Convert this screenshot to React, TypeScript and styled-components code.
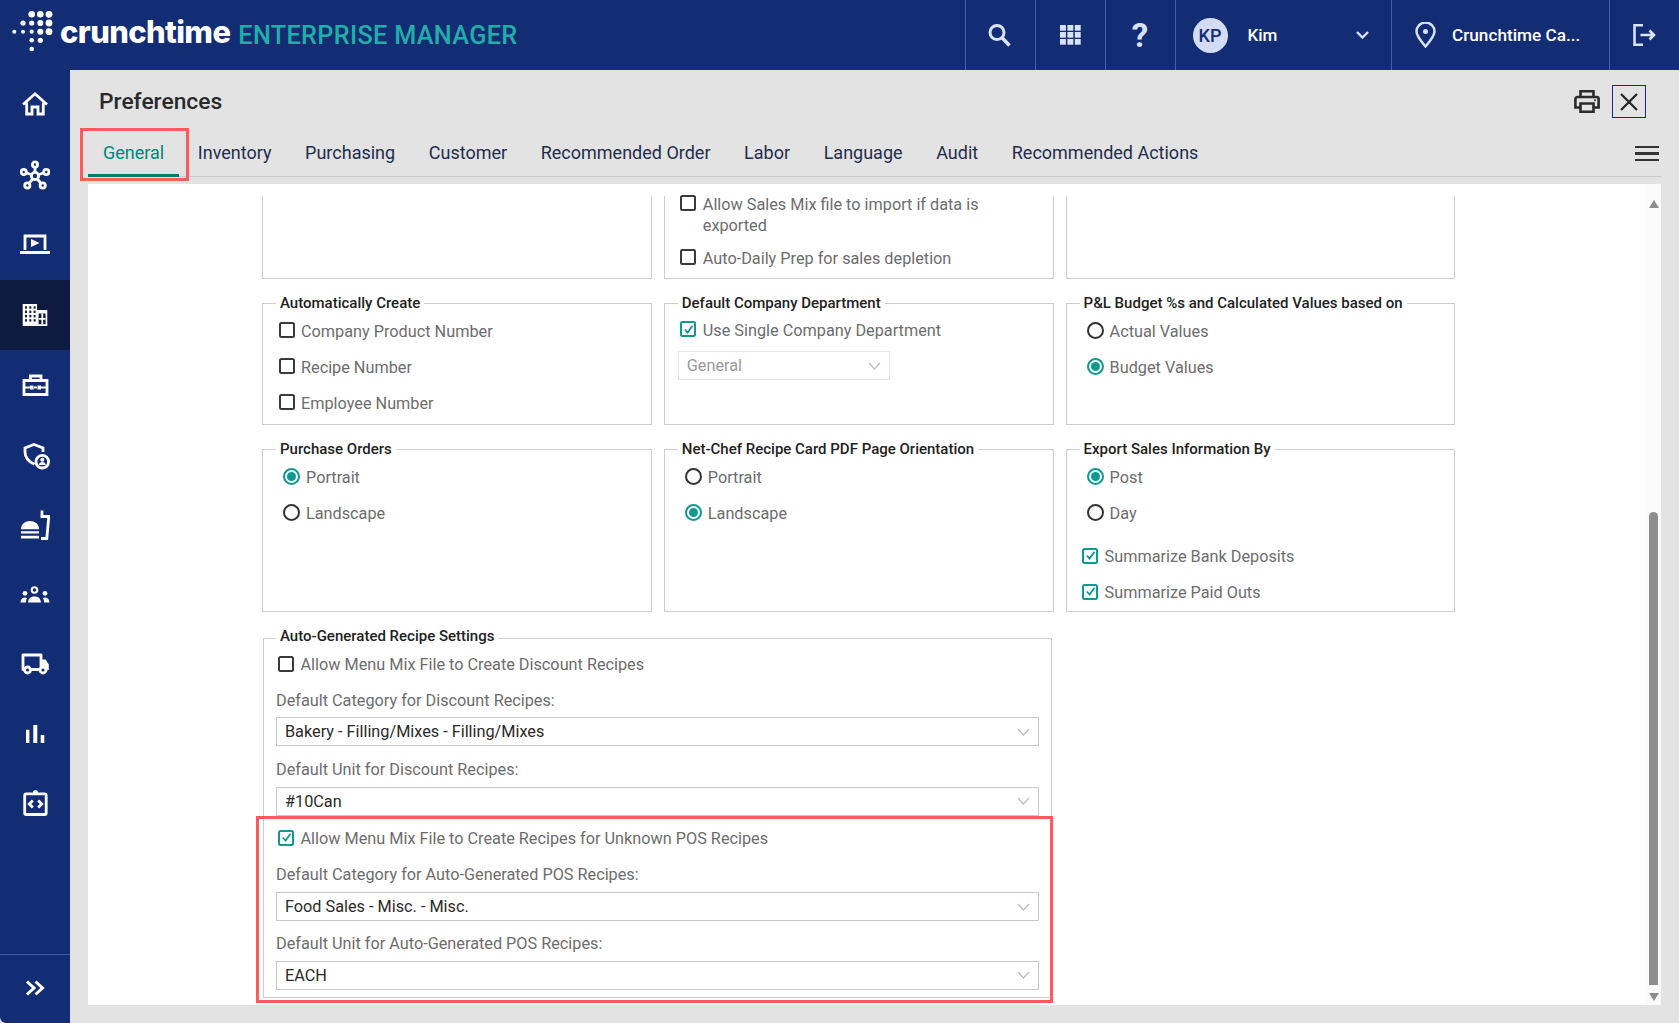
import React from 'react';
import styled, { createGlobalStyle } from 'styled-components';

const GlobalStyle = createGlobalStyle`
  html, body {
    margin: 0;
    padding: 0;
    height: 100%;
    background: #e3e3e3;
  }
  * {
    box-sizing: border-box;
  }
`;

const Page = styled.div`
  height: 100vh;
  display: flex;
  flex-direction: column;
  overflow: hidden;
  font-family: Roboto, 'Liberation Sans', sans-serif;
`;

/* ---------- top bar ---------- */

const TopBar = styled.header`
  height: 70px;
  flex: none;
  display: flex;
  align-items: stretch;
  background: #132d75;
`;

const Brand = styled.div`
  display: flex;
  align-items: center;
  flex: 1;
`;

const BrandDots = styled.svg`
  width: 60px;
  height: 70px;
  flex: none;
`;

const Wordmark = styled.span`
  font-family: Inter, sans-serif;
  font-weight: 800;
  font-size: 30.9px;
  letter-spacing: -0.6px;
  color: #fff;
  margin-top: -7px;
`;

const ProductName = styled.span`
  font-weight: 500;
  font-size: 25.2px;
  letter-spacing: 0.35px;
  color: #22aea8;
  margin-left: 8px;
`;

const BarCell = styled.div<{ $width: number }>`
  width: ${(p) => p.$width}px;
  flex: none;
  display: flex;
  align-items: center;
  justify-content: center;
  border-left: 1px solid #4460ad;
  color: #d8e2fb;
`;

const UserCell = styled(BarCell)`
  justify-content: flex-start;
  padding: 0 22px 0 17px;
`;

const LocationCell = styled(BarCell)`
  justify-content: flex-start;
  padding-left: 23px;
`;

const Avatar = styled.div`
  width: 35px;
  height: 35px;
  border-radius: 50%;
  background: #d2dcf7;
  color: #132d75;
  font-weight: 500;
  font-size: 18px;
  display: flex;
  align-items: center;
  justify-content: center;
`;

const UserName = styled.span`
  color: #fff;
  font-size: 17px;
  font-weight: 500;
  margin-left: 20px;
  flex: 1;
`;

const SiteName = styled.span`
  color: #fff;
  font-size: 17.2px;
  font-weight: 500;
  margin-left: 16px;
  white-space: nowrap;
`;

const HelpMark = styled.span`
  font-weight: 700;
  font-size: 33px;
  line-height: 1;
  color: #d8e2fb;
`;

/* ---------- side rail ---------- */

const Body = styled.div`
  flex: 1;
  display: flex;
  min-height: 0;
`;

const Rail = styled.nav`
  width: 70px;
  flex: none;
  display: flex;
  flex-direction: column;
  background: #132d75;
  border-bottom-left-radius: 6px;
`;

const RailItem = styled.div<{ $active?: boolean }>`
  height: 70px;
  display: flex;
  align-items: center;
  justify-content: center;
  color: #fff;
  background: ${(p) => (p.$active ? '#0f1a40' : 'transparent')};
`;

const RailFooter = styled.div`
  margin-top: auto;
  height: 69px;
  padding-bottom: 3px;
  border-top: 1px solid #3c57a3;
  display: flex;
  align-items: center;
  justify-content: center;
  color: #fff;
`;

/* ---------- main area ---------- */

const Main = styled.main`
  flex: 1;
  display: flex;
  flex-direction: column;
  min-width: 0;
  background: #e3e3e3;
  padding: 0 18px;
`;

const TitleRow = styled.div`
  height: 58px;
  flex: none;
  display: flex;
  align-items: center;
  padding: 5px 15px 0 11px;
`;

const Title = styled.h1`
  flex: 1;
  margin: 0;
  font-weight: 500;
  font-size: 22.8px;
  color: #2a2a2a;
`;

const CloseButton = styled.button`
  width: 34px;
  height: 33px;
  margin-left: 12px;
  padding: 0;
  background: none;
  border: 1px solid #132d75;
  display: flex;
  align-items: center;
  justify-content: center;
  color: #222;
`;

const TabBar = styled.div`
  height: 49px;
  flex: none;
  display: flex;
  align-items: stretch;
  border-bottom: 1.5px solid #c9c9c9;
`;

const Tab = styled.div<{ $active?: boolean }>`
  position: relative;
  padding: 3px 15px 0;
  margin-right: 3.6px;
  margin-bottom: -1px;
  display: flex;
  align-items: center;
  font-size: 18px;
  color: ${(p) => (p.$active ? '#00857c' : '#1f2d4d')};
  border-bottom: 3px solid ${(p) => (p.$active ? '#00796f' : 'transparent')};
`;

const TabCallout = styled.span`
  position: absolute;
  left: -8px;
  right: -10px;
  top: 0;
  bottom: -7px;
  border: 3px solid #f85c5c;
`;

const MenuButton = styled.div`
  margin-left: auto;
  margin-right: 2px;
  align-self: center;
  width: 24px;
  height: 15px;
  margin-top: 3px;
  border-top: 2.5px solid #333;
  border-bottom: 2.5px solid #333;
  display: flex;
  align-items: center;

  &::before {
    content: '';
    display: block;
    width: 100%;
    height: 2.5px;
    background: #333;
  }
`;

const Panel = styled.div`
  margin-top: 7px;
  height: 821px;
  flex: none;
  display: flex;
  background: #fff;
`;

const PanelContent = styled.div`
  flex: 1;
  padding: 12px 0 0 174px;
`;

const Columns = styled.div`
  width: 1194px;
  display: grid;
  grid-template-columns: repeat(3, 389.8px);
  grid-template-rows: 82.5px 121.5px 163px 360px;
  column-gap: 12px;
  row-gap: 24.6px;
`;

const Group = styled.section<{ $clipped?: boolean; $pad?: number }>`
  position: relative;
  border: 1.5px solid #cdcdcd;
  border-top-style: ${(p) => (p.$clipped ? 'none' : 'solid')};
  padding: ${(p) => p.$pad ?? 9}px 0 0 16px;
`;

const Legend = styled.h3`
  position: absolute;
  left: 13px;
  top: -11px;
  margin: 0;
  padding: 0 4px;
  line-height: 20px;
  font-weight: 500;
  font-size: 15px;
  color: #222;
  background: #fff;
  white-space: nowrap;
`;

const RecipeGroup = styled(Group)`
  grid-column: 1 / span 2;
  margin: 1px 2px -1px 1px;
  padding: 8px 12px 0;

  ${Legend} {
    left: 12px;
    top: -13px;
  }
`;

const OptionRow = styled.div<{ $wrap?: boolean; $height?: number }>`
  height: ${(p) => p.$height ?? 36}px;
  display: flex;
  align-items: ${(p) => (p.$wrap ? 'flex-start' : 'center')};
  font-size: 16.25px;
  line-height: 21px;
  color: #6d6d6d;
`;

const OptionText = styled.span`
  width: 290px;
  margin-top: -2px;
`;

const ExtraOptions = styled.div`
  margin-top: 7.5px;
`;

const CheckBox = styled.span<{ $checked?: boolean; $nudge?: number }>`
  width: 16px;
  height: 16px;
  flex: none;
  margin: -2px 6.5px 0 ${(p) => p.$nudge ?? -0.5}px;
  border: 2px solid ${(p) => (p.$checked ? '#0d9a92' : '#3a3a3a')};
  border-radius: 2.5px;
  background: #fff;
  display: flex;
  align-items: center;
  justify-content: center;
`;

const WrappedCheckBox = styled(CheckBox)`
  margin-top: -1px;
`;

const Radio = styled.span<{ $checked?: boolean }>`
  width: 17px;
  height: 17px;
  flex: none;
  margin: -2px 6px 0 4px;
  border: 2px solid ${(p) => (p.$checked ? '#0d9a92' : '#333')};
  border-radius: 50%;
  background: #fff;
  display: flex;
  align-items: center;
  justify-content: center;

  &::after {
    content: '';
    display: ${(p) => (p.$checked ? 'block' : 'none')};
    width: 9px;
    height: 9px;
    border-radius: 50%;
    background: #0d9a92;
  }
`;

const FieldLabel = styled.div<{ $top: number; $gap?: number }>`
  height: 22px;
  line-height: 22px;
  margin: ${(p) => p.$top}px 0 ${(p) => p.$gap ?? 6}px;
  font-size: 16.25px;
  color: #6d6d6d;
`;

const SelectBox = styled.div<{ $disabled?: boolean; $width?: number }>`
  height: 29px;
  width: ${(p) => (p.$width ? `${p.$width}px` : '100%')};
  display: flex;
  align-items: center;
  justify-content: space-between;
  padding: 0 8px;
  font-size: 16.25px;
  color: ${(p) => (p.$disabled ? '#9a9a9a' : '#2a2a2a')};
  border: 1.5px solid ${(p) => (p.$disabled ? '#e6e6e6' : '#c9c9c9')};
  background: #fff;
`;

const GeneralSelect = styled(SelectBox)`
  margin: 3px 0 0 -3px;
`;

const Callout = styled.div`
  position: relative;
  padding-top: 5px;

  &::after {
    content: '';
    position: absolute;
    left: -20px;
    right: -14px;
    top: 0;
    bottom: -13px;
    border: 3px solid #f85c5c;
    pointer-events: none;
  }
`;

const ScrollTrack = styled.div`
  width: 16px;
  flex: none;
  margin-left: -21px;
  position: relative;
  display: flex;
  flex-direction: column;
  align-items: center;
  background: #fafafa;
  padding: 16px 3px 4px 4px;
`;

const ScrollArrow = styled.span<{ $down?: boolean }>`
  width: 0;
  height: 0;
  flex: none;
  border-left: 5px solid transparent;
  border-right: 5px solid transparent;
  border-bottom: ${(p) => (p.$down ? '0' : '8px solid #8e8e8e')};
  border-top: ${(p) => (p.$down ? '8px solid #8e8e8e' : '0')};
`;

const ScrollThumb = styled.span`
  width: 9px;
  height: 473px;
  flex: none;
  margin-top: auto;
  margin-bottom: 8px;
  border-radius: 5px 5px 0 0;
  background: #8e8e8e;
`;

/* ---------- drawings ---------- */

const dots: [number, number, number][] = [
  [31.7, 14.3, 3.3], [40.3, 14.3, 3.3], [49, 14.3, 3.4],
  [23, 23, 2.6], [31.7, 23, 2.6], [40.3, 23, 3], [49, 23, 3.4],
  [14.3, 31.7, 2], [23, 31.7, 2], [31.7, 31.7, 2.1], [40.3, 31.7, 3], [49, 31.7, 3.4],
  [31.7, 40.3, 2.3], [40.3, 40.3, 2.6],
  [31.7, 49, 2.3],
];

const LogoDots = () => (
  <BrandDots viewBox="0 0 60 70">
    {dots.map(([cx, cy, r]) => (
      <circle key={`${cx}-${cy}`} cx={cx} cy={cy} r={r} fill="#fff" />
    ))}
  </BrandDots>
);

const line = { fill: 'none', stroke: 'currentColor', strokeWidth: 2.8 } as const;

const Icon30 = ({ children }: { children: React.ReactNode }) => (
  <svg width="30" height="30" viewBox="0 0 30 30">
    {children}
  </svg>
);

const HomeIcon = () => (
  <Icon30>
    <path {...line} d="M3 14.5 15 3.800l12 10.700M6.700 12.500V24H12v-7h6v7h5.300V12.500" />
  </Icon30>
);

const NetworkIcon = () => (
  <Icon30>
    <g {...line}>
      <circle cx="15" cy="16" r="3.600" />
      <circle cx="15" cy="4.500" r="2.600" />
      <circle cx="3.700" cy="12" r="2.600" />
      <circle cx="26.300" cy="12" r="2.600" />
      <circle cx="7.300" cy="25.500" r="2.600" />
      <circle cx="22.700" cy="25.500" r="2.600" />
      <path d="M15 7v5.500M6.200 12.800l5.400 1.900M23.800 12.800l-5.400 1.900M8.900 23.500l3.800-4.500M21.100 23.500l-3.800-4.500" />
    </g>
  </Icon30>
);

const LessonIcon = () => (
  <Icon30>
    <path {...line} d="M5 20V6h20v14" />
    <path d="M0 21h30v3H0z" fill="currentColor" />
    <path d="M11 9l8.500 4-8.500 4z" fill="currentColor" />
  </Icon30>
);

const BuildingIcon = () => (
  <Icon30>
    <path d="M2.700 4H17v22H2.700zM17 10h10.300v16H17z" fill="currentColor" />
    {[5, 9.300, 13.600].map((x) =>
      [6.300, 10.600, 14.900, 19.200].map((y) => (
        <rect key={`${x}-${y}`} x={x} y={y} width="2" height="2.400" fill="#0f1a40" />
      )),
    )}
    <path d="M18.600 13.500h7v10.700h-7z" fill="#0f1a40" />
    <path d="M21.400 13.500h1.800v10.700h-1.800zM18.600 18h7v1.800h-7z" fill="currentColor" />
  </Icon30>
);

const CaseIcon = () => (
  <Icon30>
    <path {...line} d="M4 10.500h23v14H4zM10.500 10.500V6h10.500v4.500" />
    <path {...line} d="M4 17.500h6M14 17.500h3M21 17.500h6" strokeWidth={2.200} />
    <path d="M10 15.500h3.500v4H10zM17.500 15.500H21v4h-3.500z" fill="currentColor" />
  </Icon30>
);

const ShieldIcon = () => (
  <Icon30>
    <path {...line} d="M14.500 24.300C8 21.500 5 17.500 5 12V8l9-3.500L23 8v4" />
    <circle cx="22.300" cy="21.700" r="6.300" {...line} />
    <circle cx="22.300" cy="19.800" r="2" fill="currentColor" />
    <path d="M18.800 25c.5-2.200 1.800-3 3.500-3s3 .8 3.500 3z" fill="currentColor" />
  </Icon30>
);

const FoodIcon = () => (
  <Icon30>
    <path d="M1 19.200c0-5.200 4-8.200 9-8.200s9 3 9 8.200z" fill="currentColor" />
    <path d="M1 21.300h18v2.300H1zM1 25.800h18v2.800H1z" fill="currentColor" />
    <path {...line} d="M20.500 6.500h8.300L26.800 28.500H21M22 .5v6" />
  </Icon30>
);

const TeamIcon = () => (
  <Icon30>
    <circle cx="14.500" cy="10" r="2.800" {...line} strokeWidth={2} />
    <circle cx="5" cy="13.300" r="2.400" fill="currentColor" />
    <circle cx="25" cy="13.300" r="2.400" fill="currentColor" />
    <path d="M8 22.500c.5-4.500 3-6 6.500-6s6 1.500 6.500 6zM.5 22.500c.2-3.500 2-5 4.500-5 1 0 1.600.2 2.200.6C6.200 19.300 6 20.700 6 22.500zM29.500 22.500c-.2-3.500-2-5-4.500-5-1 0-1.600.2-2.200.6 1 1.200 1.200 2.600 1.200 4.400z" fill="currentColor" />
  </Icon30>
);

const TruckIcon = () => (
  <Icon30>
    <path {...line} d="M4.300 19.500H3V5h18v14.500H11M17 19.500h2" strokeLinejoin="round" />
    <path d="M21 9.500h4.500l3.300 5v5.500H21z" fill="currentColor" />
    <circle cx="7.600" cy="20" r="3" {...line} fill="#132d75" />
    <circle cx="23" cy="20" r="3" {...line} fill="#132d75" />
  </Icon30>
);

const BarsIcon = () => (
  <Icon30>
    <path d="M6 9.700h3.400V23H6zM13.300 5h4v18h-4zM20.700 15h3.600v8h-3.600z" fill="currentColor" />
  </Icon30>
);

const ClipCodeIcon = () => (
  <Icon30>
    <rect x="4.700" y="3.800" width="21.500" height="20.700" rx="1.500" {...line} />
    <path d="M13 2.500a2.400 2.400 0 0 1 5 0v1.500h-5z" fill="currentColor" />
    <path d="M12.800 10.500 9.300 14l3.500 3.500M18.200 10.500l3.500 3.500-3.500 3.500" {...line} />
  </Icon30>
);

const railIcons = [
  HomeIcon, NetworkIcon, LessonIcon, BuildingIcon, CaseIcon, ShieldIcon,
  FoodIcon, TeamIcon, TruckIcon, BarsIcon, ClipCodeIcon,
];

const SearchIcon = () => (
  <svg width="24" height="24" viewBox="0 0 24 24" fill="none" stroke="currentColor">
    <circle cx="9" cy="9.500" r="7" strokeWidth="3" />
    <path d="M14 14.800 21.500 22.500" strokeWidth="3.600" />
  </svg>
);

const AppsIcon = () => (
  <svg width="21" height="20" viewBox="0 0 21 20" fill="currentColor">
    {[0, 7.400, 14.800].map((x) =>
      [0, 7, 14].map((y) => <rect key={`${x}-${y}`} x={x} y={y} width="5.900" height="5.700" />),
    )}
  </svg>
);

const DownChevron = () => (
  <svg width="13" height="8" viewBox="0 0 13 8" fill="none" stroke="currentColor" strokeWidth="2.400">
    <path d="M1 1l5.500 5.500L12 1" />
  </svg>
);

const PinIcon = () => (
  <svg width="21" height="26" viewBox="0 0 21 26" fill="none" stroke="currentColor" strokeWidth="2.500">
    <path d="M10.500 24.500C5.500 18.500 1.500 14 1.500 9.500a9 9 0 0 1 18 0c0 4.500-4 9-9 15z" />
    <circle cx="10.500" cy="9.500" r="2.500" fill="currentColor" stroke="none" />
  </svg>
);

const LogoutIcon = () => (
  <svg width="24" height="22" viewBox="0 0 24 22" fill="none" stroke="currentColor" strokeWidth="2.600">
    <path d="M10 1.300H1.500v19.400H10" />
    <path d="M7.500 11H21M16.500 6.500 21 11l-4.500 4.500" />
  </svg>
);

const RailExpandIcon = () => (
  <svg width="20" height="16" viewBox="0 0 20 16" fill="none" stroke="currentColor" strokeWidth="3">
    <path d="M2 1.500 9 8l-7 6.500M10.500 1.500 17.500 8l-7 6.500" />
  </svg>
);

const PrintIcon = () => (
  <svg width="26" height="23" viewBox="0 0 26 23" fill="none" stroke="#2b2b2b" strokeWidth="2.600">
    <path d="M6.500 7V1.300h13V7" />
    <path d="M6 17.500H1.400V9a2 2 0 0 1 2-2h19.200a2 2 0 0 1 2 2v8.500H20" />
    <path d="M6.500 13.500h13v8.200h-13z" />
    <circle cx="21" cy="10.300" r="1" fill="#2b2b2b" stroke="none" />
  </svg>
);

const CloseIcon = () => (
  <svg width="18" height="18" viewBox="0 0 18 18" fill="none" stroke="currentColor" strokeWidth="2.200">
    <path d="M1 1l16 16M17 1 1 17" />
  </svg>
);

const TickMark = () => (
  <svg width="11" height="11" viewBox="0 0 11 11" fill="none" stroke="#0d9a92" strokeWidth="1.800">
    <path d="M1.800 5.500 4.600 8.500 9.500 1.800" />
  </svg>
);

const SelectChevron = () => (
  <svg width="13" height="8" viewBox="0 0 13 8" fill="none" stroke="#bcbcbc" strokeWidth="1.200">
    <path d="M1 1l5.500 6L12 1" />
  </svg>
);

/* ---------- small form parts ---------- */

const Check = ({ label, checked, nudge }: { label: string; checked?: boolean; nudge?: number }) => (
  <OptionRow>
    <CheckBox $checked={checked} $nudge={nudge}>
      {checked && <TickMark />}
    </CheckBox>
    {label}
  </OptionRow>
);

const Choice = ({ label, checked }: { label: string; checked?: boolean }) => (
  <OptionRow>
    <Radio $checked={checked} />
    {label}
  </OptionRow>
);

const Select = ({ value }: { value: string }) => (
  <SelectBox>
    {value}
    <SelectChevron />
  </SelectBox>
);

const tabs = [
  'General', 'Inventory', 'Purchasing', 'Customer', 'Recommended Order',
  'Labor', 'Language', 'Audit', 'Recommended Actions',
];

export default function App() {
  return (
    <Page>
      <GlobalStyle />
      <TopBar>
        <Brand>
          <LogoDots />
          <Wordmark>crunchtime</Wordmark>
          <ProductName>ENTERPRISE MANAGER</ProductName>
        </Brand>
        <BarCell $width={70}><SearchIcon /></BarCell>
        <BarCell $width={70}><AppsIcon /></BarCell>
        <BarCell $width={70}><HelpMark>?</HelpMark></BarCell>
        <UserCell $width={216.5}>
          <Avatar>KP</Avatar>
          <UserName>Kim</UserName>
          <DownChevron />
        </UserCell>
        <LocationCell $width={218}>
          <PinIcon />
          <SiteName>Crunchtime Ca...</SiteName>
        </LocationCell>
        <BarCell $width={70}><LogoutIcon /></BarCell>
      </TopBar>

      <Body>
        <Rail>
          {railIcons.map((RailIcon, i) => (
            <RailItem key={i} $active={i === 3}>
              <RailIcon />
            </RailItem>
          ))}
          <RailFooter>
            <RailExpandIcon />
          </RailFooter>
        </Rail>

        <Main>
          <TitleRow>
            <Title>Preferences</Title>
            <PrintIcon />
            <CloseButton><CloseIcon /></CloseButton>
          </TitleRow>

          <TabBar>
            {tabs.map((name, i) => (
              <Tab key={name} $active={i === 0}>
                {name}
                {i === 0 && <TabCallout />}
              </Tab>
            ))}
            <MenuButton />
          </TabBar>

          <Panel>
            <PanelContent>
              <Columns>
                <Group $clipped />
                <Group $clipped $pad={0}>
                  <OptionRow $wrap $height={49}>
                    <WrappedCheckBox />
                    <OptionText>Allow Sales Mix file to import if data is exported</OptionText>
                  </OptionRow>
                  <OptionRow $height={26}>
                    <CheckBox />
                    Auto-Daily Prep for sales depletion
                  </OptionRow>
                </Group>
                <Group $clipped />

                <Group $pad={9}>
                  <Legend>Automatically Create</Legend>
                  <Check label="Company Product Number" />
                  <Check label="Recipe Number" />
                  <Check label="Employee Number" />
                </Group>
                <Group $pad={8}>
                  <Legend>Default Company Department</Legend>
                  <Check label="Use Single Company Department" checked />
                  <GeneralSelect $disabled $width={212}>
                    General
                    <SelectChevron />
                  </GeneralSelect>
                </Group>
                <Group $pad={9}>
                  <Legend>P&amp;L Budget %s and Calculated Values based on</Legend>
                  <Choice label="Actual Values" />
                  <Choice label="Budget Values" checked />
                </Group>

                <Group>
                  <Legend>Purchase Orders</Legend>
                  <Choice label="Portrait" checked />
                  <Choice label="Landscape" />
                </Group>
                <Group>
                  <Legend>Net-Chef Recipe Card PDF Page Orientation</Legend>
                  <Choice label="Portrait" />
                  <Choice label="Landscape" checked />
                </Group>
                <Group>
                  <Legend>Export Sales Information By</Legend>
                  <Choice label="Post" checked />
                  <Choice label="Day" />
                  <ExtraOptions>
                    <Check label="Summarize Bank Deposits" checked />
                    <Check label="Summarize Paid Outs" checked />
                  </ExtraOptions>
                </Group>

                <RecipeGroup>
                  <Legend>Auto-Generated Recipe Settings</Legend>
                  <Check label="Allow Menu Mix File to Create Discount Recipes" nudge={2} />
                  <FieldLabel $top={7.5} $gap={5}>Default Category for Discount Recipes:</FieldLabel>
                  <Select value="Bakery - Filling/Mixes - Filling/Mixes" />
                  <FieldLabel $top={13} $gap={5.5}>Default Unit for Discount Recipes:</FieldLabel>
                  <Select value="#10Can" />
                  <Callout>
                    <Check label="Allow Menu Mix File to Create Recipes for Unknown POS Recipes" checked nudge={2} />
                    <FieldLabel $top={7.5}>Default Category for Auto-Generated POS Recipes:</FieldLabel>
                    <Select value="Food Sales - Misc. - Misc." />
                    <FieldLabel $top={11.5}>Default Unit for Auto-Generated POS Recipes:</FieldLabel>
                    <Select value="EACH" />
                  </Callout>
                </RecipeGroup>
              </Columns>
            </PanelContent>

            <ScrollTrack>
              <ScrollArrow />
              <ScrollThumb />
              <ScrollArrow $down />
            </ScrollTrack>
          </Panel>
        </Main>
      </Body>
    </Page>
  );
}
